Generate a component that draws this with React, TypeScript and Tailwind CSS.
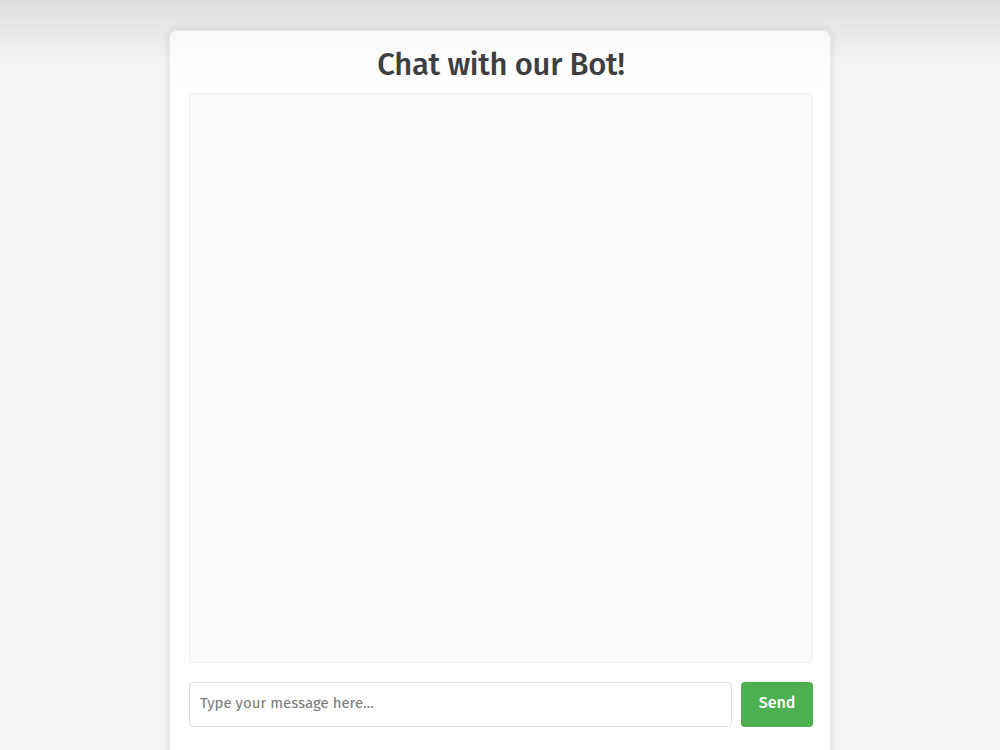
export default function App() {
    return (
        <div
            className="min-h-[750px] bg-[#f4f4f4] bg-[linear-gradient(to_bottom,#dcdcde_0px,#e6e6e8_25px,#f4f4f4_60px)] pt-[30px] overflow-hidden"
            style={{ fontFamily: "'Fira Sans', 'Roboto', 'Noto Sans', sans-serif" }}
        >
            <div className="mx-auto w-[662px] h-[740px] rounded-[8px] bg-[linear-gradient(to_bottom,#f8f8f8,#ffffff_60px)] shadow-[0_0_8px_rgba(0,0,0,0.12)] border border-[#e8e8e8] pl-[19px] pr-[17px] pt-[16px]">
                {/* 标题 */}
                <h1 className="text-center text-[31px] leading-[36px] font-medium text-[#3d3f42] tracking-[-0.3px]">
                    Chat with our Bot!
                </h1>
                {/* 聊天记录区域 */}
                <div className="mt-[10px] h-[570px] bg-[#f9f9f9] border border-[#eeeeee] rounded-[3px]"></div>
                {/* 输入框和发送按钮 */}
                <div className="mt-[19px] flex gap-[9px]">
                    <input
                        type="text"
                        placeholder="Type your message here..."
                        className="flex-1 h-[45px] px-[10px] pb-[3px] text-[15px] border border-[#dddddd] rounded-[4px] bg-white placeholder:text-[#777777] outline-none"
                    />
                    <button className="w-[72px] h-[45px] pb-[3px] rounded-[4px] bg-[#4caf50] text-white text-[16px] font-medium">
                        Send
                    </button>
                </div>
            </div>
        </div>
    );
}
